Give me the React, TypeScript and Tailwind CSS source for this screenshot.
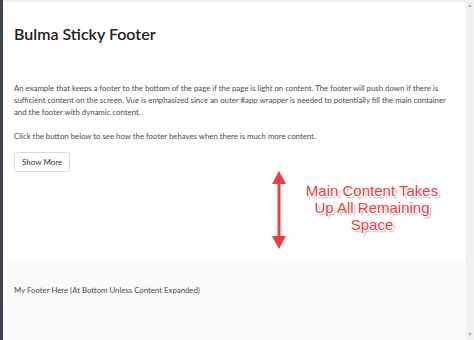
import React from 'react';

const Arrow: React.FC = () => (
  <svg width="16" height="78" viewBox="0 0 16 78" className="block">
    <rect x="6.5" y="10" width="3" height="58" fill="#ec3c44" />
    <polygon points="8,0 15,13 1,13" fill="#ec3c44" />
    <polygon points="8,78 15,65 1,65" fill="#ec3c44" />
  </svg>
);

export default function App() {
  return (
    <div className="h-[340px] w-[474px] flex bg-white overflow-hidden font-['Lato',sans-serif]">
      {/* left window edge */}
      <div className="w-[3px] bg-[#3e4450]" />

      <div className="flex-1 flex flex-col relative">
        <div className="h-[2px] bg-[#ededed]" />

        {/* main */}
        <main className="flex-1 pl-[11px] pr-4 pt-[21px]">
          <h1 className="text-[16px] leading-[22px] font-semibold text-[#222]">Bulma Sticky Footer</h1>
          <div className="mt-[37px] text-[7.8px] leading-[12px] text-[#4a4a4a]">
            <p>
              An example that keeps a footer to the bottom of the page if the page is light on content. The footer will push down if there is
              sufficient content on the screen. Vue is emphasized since an outer #app wrapper is needed to potentially fill the main container and
              the footer with dynamic content.
            </p>
            <p className="mt-[12px]">Click the button below to see how the footer behaves when there is much more content.</p>
          </div>
          <button className="mt-[10px] h-[20px] px-[7px] border border-[#dbdbdb] rounded-[2px] bg-white text-[8px] text-[#363636]">
            Show More
          </button>
        </main>

        {/* annotation overlay */}
        <div className="absolute left-[268px] top-[171px]">
          <Arrow />
        </div>
        <div className="absolute left-[294px] top-[182px] w-[150px] text-center font-['Liberation_Sans',sans-serif] text-[15px] leading-[17px] text-[#ec3c44] [text-shadow:1px_1px_0_#fff,-1px_-1px_0_#fff,1px_-1px_0_#fff,-1px_1px_0_#fff,2px_2px_2px_#999]">
          Main Content Takes Up All Remaining Space
        </div>

        {/* footer */}
        <footer className="h-[79px] ml-[4px] bg-[#fafafa] pl-[7px] pt-[23px]">
          <p className="text-[7.8px] leading-[12px] text-[#4a4a4a]">My Footer Here (At Bottom Unless Content Expanded)</p>
        </footer>
      </div>

      {/* scrollbar */}
      <div className="w-[8px] bg-[#f1f1f1] flex flex-col justify-between items-center py-[3px] text-[#a3a3a3] text-[5px] leading-[5px]">
        <span>▲</span>
        <span>▼</span>
      </div>
    </div>
  );
}
